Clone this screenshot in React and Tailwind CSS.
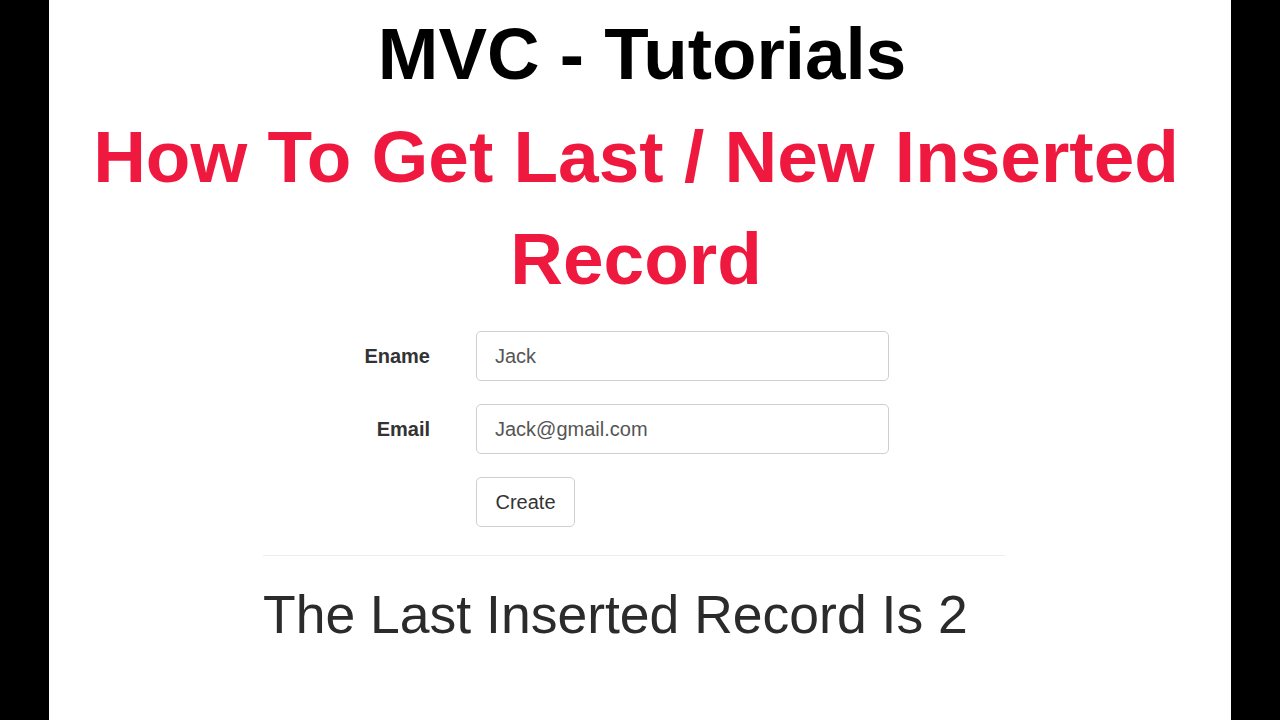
export default function App() {
	const fields = [
		{ id: 'ename', label: 'Ename', value: 'Jack' },
		{ id: 'email', label: 'Email', value: 'Jack@gmail.com' },
	];

	return (
		<div className="flex h-[720px] w-[1280px] bg-black font-['Liberation_Sans',Arial,sans-serif]">
			<div className="ml-[49px] h-full w-[1182px] bg-white">
				<h1 className="mt-[14px] pl-[4px] text-center text-[72.8px] font-bold leading-[80px] text-black">
					MVC - Tutorials
				</h1>
				<h2 className="mt-[12px] pl-[26px] pr-[34px] text-center text-[73px] font-bold leading-[102px] text-[#ef1940]">
					How To Get Last / New Inserted Record
				</h2>

				<div className="ml-[214px] mt-[21px] w-[742px]">
					<div className="flex flex-col gap-[23px]">
						{fields.map(({ id, label, value }) => (
							<div key={id} className="flex items-center gap-[46px]">
								<label
									htmlFor={id}
									className="w-[167px] text-right text-[20px] font-bold leading-[50px] text-[#333]"
								>
									{label}
								</label>
								<input
									id={id}
									readOnly
									value={value}
									className="h-[50px] w-[413px] rounded-[5px] border border-[#cfcfcf] px-[18px] text-[20px] text-[#555] outline-none"
								/>
							</div>
						))}
						<div className="flex gap-[46px]">
							<div className="w-[167px]" />
							<button
								type="button"
								className="h-[50px] w-[99px] rounded-[5px] border border-[#cfcfcf] bg-white text-[20px] text-[#333]"
							>
								Create
							</button>
						</div>
					</div>

					<hr className="mt-[28px] border-t border-[#eeeeee]" />

					<p className="mt-[29px] text-[53.5px] leading-[60px] text-[#2b2b2b]">
						The Last Inserted Record Is 2
					</p>
				</div>
			</div>
		</div>
	);
}
